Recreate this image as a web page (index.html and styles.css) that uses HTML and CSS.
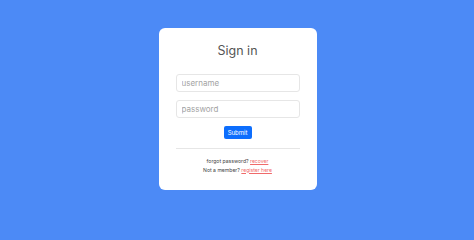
FILE: index.html
```html
<!DOCTYPE html>
<html lang="en">
<head>
<meta charset="utf-8">
<title>Sign in</title>
<link rel="stylesheet" href="styles.css">
</head>
<body>
<main class="page">
  <form class="card">
    <h1 class="title">Sign in</h1>
    <input class="field" type="text" placeholder="username">
    <input class="field" type="password" placeholder="password">
    <button class="submit" type="button">Submit</button>
    <hr class="rule">
    <p class="note">forgot password? <a href="#">recover</a></p>
    <p class="note">Not a member? <a href="#">register here</a></p>
  </form>
</main>
</body>
</html>
```
FILE: styles.css
```css
html, body {
  margin: 0;
  padding: 0;
}
body {
  background: #4c8af6;
  font-family: "Inter", "Open Sans", sans-serif;
  height: 215px;
  overflow: hidden;
}
.page {
  display: flex;
  justify-content: center;
  padding-top: 28px;
  padding-left: 1px;
}
.card {
  width: 158px;
  box-sizing: border-box;
  background: #fff;
  border-radius: 6px;
  padding: 15px 17px 16px;
  display: flex;
  flex-direction: column;
  align-items: center;
}
.title {
  margin: 0 0 15px;
  font-size: 12.5px;
  line-height: 16px;
  font-weight: 400;
  color: #555;
}
.field {
  width: 100%;
  box-sizing: border-box;
  height: 18px;
  margin: 0 0 8px;
  border: 1px solid #e6e6e6;
  border-radius: 3px;
  padding: 0 5px;
  font-family: inherit;
  font-size: 8px;
  color: #555;
  outline: none;
}
.field::placeholder {
  color: #a3a3a3;
}
.submit {
  width: 28px;
  height: 13px;
  padding: 0;
  border: none;
  border-radius: 2px;
  background: #0d6efd;
  color: #fff;
  font-family: inherit;
  font-size: 6px;
  line-height: 13px;
}
.rule {
  width: 100%;
  margin: 9px 0 8px;
  border: none;
  border-top: 1px solid #e6e6e6;
}
.note {
  margin: 0;
  font-size: 5.1px;
  line-height: 8.5px;
  color: #444;
}
.note a {
  color: #f06a6a;
}
```
